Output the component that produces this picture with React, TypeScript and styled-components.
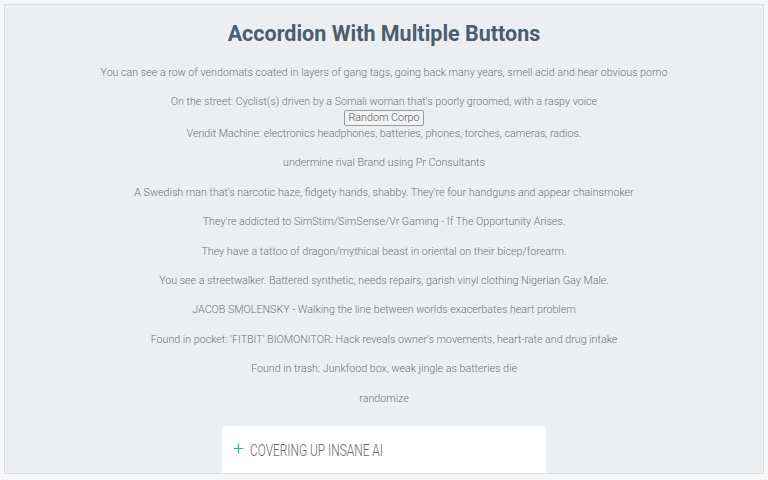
import React from "react";
import styled, { createGlobalStyle } from "styled-components";

const GlobalStyle = createGlobalStyle`
  html, body {
    margin: 0;
    padding: 0;
    background: #f7f7f7;
    font-family: Roboto, "Liberation Sans", sans-serif;
  }
`;

const Panel = styled.div`
  margin: 4px;
  height: 470px;
  box-sizing: border-box;
  border: 1px solid #dcdfe2;
  background: #eceff1;
  overflow: hidden;
  display: flex;
  flex-direction: column;
  align-items: center;
`;

const Title = styled.h1`
  margin: 16px 0 18px;
  font-size: 21.5px;
  font-weight: 700;
  line-height: 26px;
  color: #4a5f6b;
`;

const Para = styled.p`
  margin: 0 0 13.8px;
  font-size: 10.7px;
  font-weight: 300;
  line-height: 15.6px;
  color: #6d7477;
  text-align: center;
`;

const CorpoButton = styled.button`
  display: inline-block;
  margin: 0;
  padding: 0 4px;
  height: 16px;
  font-family: Roboto, "Liberation Sans", sans-serif;
  font-size: 10.7px;
  font-weight: 300;
  line-height: 14px;
  color: #555;
  background: #f1f3f4;
  border: 1px solid #9a9a9a;
  border-radius: 2px;
`;

const Randomize = styled.span`
  cursor: pointer;
`;

const Card = styled.div`
  margin-top: 6px;
  width: 324px;
  background: #fff;
  border-radius: 4px 4px 0 0;
`;

const Item = styled.div`
  display: flex;
  align-items: center;
  gap: 6px;
  height: 49px;
  padding: 0 12px 0 11px;
  border-bottom: 1px solid #e3e6e8;
`;

const Plus = styled.span`
  color: #28a9b8;
  font-size: 19px;
  font-weight: 300;
  line-height: 1;
  margin-top: -3px;
`;

const ItemTitle = styled.span`
  display: inline-block;
  font-family: Roboto, "Liberation Sans", sans-serif;
  font-weight: 300;
  font-size: 17px;
  color: #63686b;
  transform: scaleX(0.7);
  transform-origin: left center;
  white-space: nowrap;
`;

const lines = [
  "undermine rival Brand using Pr Consultants",
  "A Swedish man that's narcotic haze, fidgety hands, shabby. They're four handguns and appear chainsmoker",
  "They're addicted to SimStim/SimSense/Vr Gaming - If The Opportunity Arises.",
  "They have a tattoo of dragon/mythical beast in oriental on their bicep/forearm.",
  "You see a streetwalker. Battered synthetic, needs repairs, garish vinyl clothing Nigerian Gay Male.",
  "JACOB SMOLENSKY - Walking the line between worlds exacerbates heart problem",
  "Found in pocket: 'FITBIT' BIOMONITOR: Hack reveals owner's movements, heart-rate and drug intake",
  "Found in trash: Junkfood box, weak jingle as batteries die",
];

export default function App() {
  return (
    <>
      <GlobalStyle />
      <Panel>
        <Title>Accordion With Multiple Buttons</Title>
        <Para>
          You can see a row of vendomats coated in layers of gang tags, going back many years, smell acid and hear
          obvious porno
        </Para>
        <Para>
          On the street: Cyclist(s) driven by a Somali woman that's poorly groomed, with a raspy voice
          <br />
          <CorpoButton>Random Corpo</CorpoButton>
          <br />
          Vendit Machine: electronics headphones, batteries, phones, torches, cameras, radios.
        </Para>
        {lines.map((line) => (
          <Para key={line}>{line}</Para>
        ))}
        <Para>
          <Randomize>randomize</Randomize>
        </Para>
        <Card>
          <Item>
            <Plus>+</Plus>
            <ItemTitle>COVERING UP INSANE AI</ItemTitle>
          </Item>
        </Card>
      </Panel>
    </>
  );
}
